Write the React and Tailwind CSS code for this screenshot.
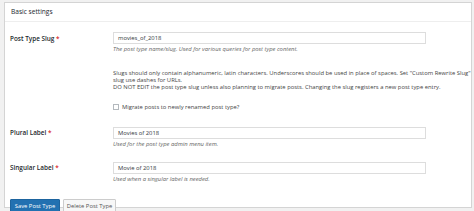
export default function App() {
  const font = { fontFamily: '"Open Sans", "Noto Sans", sans-serif' };

  return (
    <div
      className="w-[474px] h-[211px] overflow-hidden bg-[#f1f1f1] pt-[2px] pl-[4px] text-[5.85px] text-[#444]"
      style={font}
    >
      <div className="relative w-[468px] h-[206px] border border-[#d4d4d4] bg-white overflow-hidden">
        <div className="h-[19px] border-b border-[#eeeeee] pl-[6px] flex items-center text-[6.6px] text-[#23282d]">
          Basic settings
        </div>

        {/* Post Type Slug */}
        <div className="flex">
          <div className="w-[108px] shrink-0 pl-[5px] pt-[13px] leading-[8px] text-[6.4px] font-semibold text-[#23282d]">
            Post Type Slug <span className="text-[#dc3232]">*</span>
          </div>
          <div className="pt-[10px]">
            <div className="w-[313px] h-[12px] border border-[#dddddd] flex items-center px-[4px] text-[#32373c]">
              movies_of_2018
            </div>
            <p className="mt-[1px] leading-[8px] italic text-[#666]">
              The post type name/slug. Used for various queries for post type content.
            </p>
            <p className="mt-[17px] leading-[7px] whitespace-nowrap">
              Slugs should only contain alphanumeric, latin characters. Underscores should be used in place of spaces. Set "Custom Rewrite Slug"
            </p>
            <p className="leading-[7px]">slug use dashes for URLs.</p>
            <p className="leading-[7px]">
              DO NOT EDIT the post type slug unless also planning to migrate posts. Changing the slug registers a new post type entry.
            </p>
            <label className="mt-[12px] flex items-center gap-[3px] leading-[8px]">
              <span className="w-[6px] h-[6px] border border-[#b4b9be] bg-white" />
              Migrate posts to newly renamed post type?
            </label>
          </div>
        </div>

        {/* Plural Label */}
        <div className="flex">
          <div className="w-[108px] shrink-0 pl-[5px] pt-[18px] leading-[8px] text-[6.4px] font-semibold text-[#23282d]">
            Plural Label <span className="text-[#dc3232]">*</span>
          </div>
          <div className="pt-[16px]">
            <div className="w-[313px] h-[12px] border border-[#dddddd] flex items-center px-[4px] text-[#32373c]">
              Movies of 2018
            </div>
            <p className="mt-[1px] leading-[8px] italic text-[#666]">
              Used for the post type admin menu item.
            </p>
          </div>
        </div>

        {/* Singular Label */}
        <div className="flex">
          <div className="w-[108px] shrink-0 pl-[5px] pt-[16px] leading-[8px] text-[6.4px] font-semibold text-[#23282d]">
            Singular Label <span className="text-[#dc3232]">*</span>
          </div>
          <div className="pt-[14px]">
            <div className="w-[313px] h-[12px] border border-[#dddddd] flex items-center px-[4px] text-[#32373c]">
              Movie of 2018
            </div>
            <p className="mt-[1px] leading-[8px] italic text-[#666]">
              Used when a singular label is needed.
            </p>
          </div>
        </div>
      </div>

      <div className="absolute left-[10px] top-[199px] flex gap-[3px]">
        <button className="w-[50px] h-[14px] bg-[#2271b1] border border-[#1d649e] text-white text-[5.85px] rounded-[1px]" style={font}>
          Save Post Type
        </button>
        <button className="w-[53px] h-[14px] bg-[#f7f7f7] border border-[#cccccc] text-[#555] text-[5.85px] rounded-[1px]" style={font}>
          Delete Post Type
        </button>
      </div>
    </div>
  );
}
